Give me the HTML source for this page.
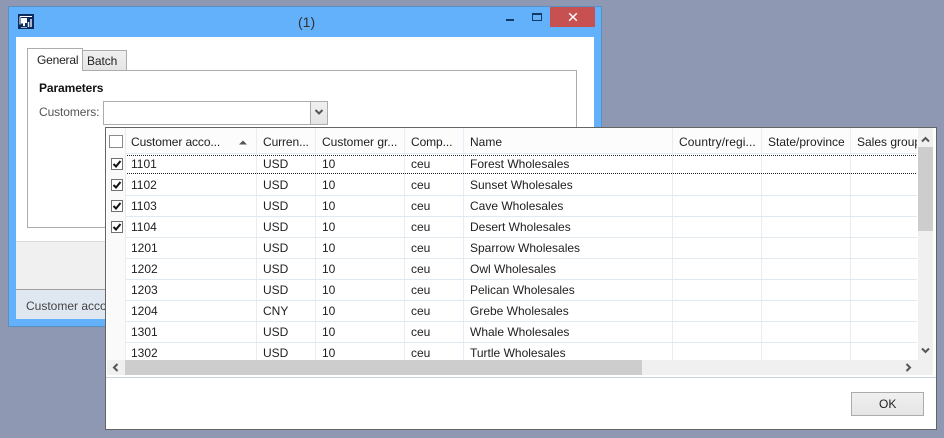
<!DOCTYPE html>
<html><head><meta charset="utf-8">
<style>
html,body{margin:0;padding:0}
body{width:944px;height:438px;position:relative;overflow:hidden;background:#8f98b2;font-family:"Liberation Sans",sans-serif;font-size:12px;color:#1e1e1e}
div{position:absolute;box-sizing:border-box}
.t{white-space:nowrap;line-height:16px;height:16px}
.r{left:126px;width:791px;height:1px;background:#e1e9f1}
.c{top:128px;width:1px;height:232px;background:#e6edf4}
.h{top:134px}
.cb{left:111px;width:12px;height:12px;border:1px solid #707070;background:#fff}
.cb svg{position:absolute;left:0;top:0}
.d{left:127px;width:790px;height:1px;background-image:linear-gradient(90deg,#222 50%,transparent 50%);background-size:2px 1px}
</style></head><body>
<!-- main window -->
<div style="left:8px;top:6px;width:594px;height:321px;background:#63b0fb;border:1px solid #5b8fc0"></div>
<div style="left:16px;top:37px;width:578px;height:282px;background:#fff"></div>
<svg style="position:absolute;left:18px;top:14px" width="16" height="15" viewBox="0 0 16 15"><rect width="16" height="15" fill="#0c2a5c"/><path d="M2 2.500h12M2 2.500v8" stroke="#fff" stroke-width="1"/><path d="M3 4h6v5H7v3H5V9.500H3z" fill="#fff"/><path d="M10.500 13V8M13 13V5" stroke="#dfe8f5" stroke-width="1.500"/><path d="M3 13.500h6" stroke="#9fb4d0" stroke-width="1"/></svg>
<div class="t" style="left:298px;top:14px;font-size:14px;color:#333">(1)</div>
<div style="left:506px;top:19px;width:8px;height:2px;background:#123a66"></div>
<div style="left:532px;top:13px;width:10px;height:8px;border:1px solid #123a66;border-top-width:2px"></div>
<div style="left:550px;top:7px;width:45px;height:20px;background:#c75050"></div>
<svg style="position:absolute;left:568px;top:12px" width="10" height="10" viewBox="0 0 10 10"><path d="M1.200 1.200l7.600 7.600M8.800 1.200L1.200 8.800" stroke="#fff" stroke-width="1.400"/></svg>
<!-- tab pane -->
<div style="left:27px;top:70px;width:550px;height:158px;border:1px solid #acacac;background:#fff"></div>
<div style="left:82px;top:50px;width:45px;height:21px;border:1px solid #acacac;background:linear-gradient(#f0f0f0,#e5e5e5)"></div>
<div style="left:27px;top:48px;width:56px;height:23px;border:1px solid #acacac;border-bottom:0;background:#fff"></div>
<div class="t" style="left:37px;top:52px;color:#222;letter-spacing:-.2px">General</div>
<div class="t" style="left:87px;top:53px;color:#222;letter-spacing:-.1px">Batch</div>
<div class="t" style="left:39px;top:80px;font-weight:bold;color:#111;letter-spacing:-.1px">Parameters</div>
<div class="t" style="left:39px;top:104px;color:#555;letter-spacing:-.1px">Customers:</div>
<div style="left:103px;top:101px;width:225px;height:24px;border:1px solid #acacac;background:#fff"></div>
<div style="left:310px;top:102px;width:17px;height:22px;border-left:1px solid #acacac;background:linear-gradient(#f0f0f0,#e5e5e5)"></div>
<svg style="position:absolute;left:314px;top:108px" width="10" height="9" viewBox="0 0 10 9"><path d="M1.500 2l3.500 3.500L8.500 2" fill="none" stroke="#555" stroke-width="2"/></svg>
<!-- bottom bands -->
<div style="left:16px;top:241px;width:578px;height:48px;background:#f0f0f0;border-top:1px solid #dcdcdc"></div>
<div style="left:16px;top:289px;width:578px;height:30px;background:#dfe8f1;border-top:1px solid #a0a0a0"></div>
<div class="t" style="left:26px;top:298px;color:#444">Customer acco</div>
<!-- dialog -->
<div style="left:105px;top:127px;width:832px;height:303px;background:#fff;border:1px solid #646464"></div>
<div style="left:107px;top:128px;width:19px;height:232px;background:#fafafa"></div>
<div style="left:107px;top:128px;width:810px;height:25px;background:#fcfcfc"></div>
<div style="left:126px;top:153px;width:791px;height:1px;background:#e1e9f1"></div>
<div class="c" style="left:125px"></div><div class="c" style="left:256px"></div><div class="c" style="left:315px"></div><div class="c" style="left:404px"></div><div class="c" style="left:463px"></div><div class="c" style="left:672px"></div><div class="c" style="left:761px"></div><div class="c" style="left:850px"></div>
<div class="r" style="top:195px"></div><div class="r" style="top:216px"></div><div class="r" style="top:237px"></div><div class="r" style="top:258px"></div><div class="r" style="top:279px"></div><div class="r" style="top:300px"></div><div class="r" style="top:321px"></div><div class="r" style="top:342px"></div>
<div class="d" style="top:155px"></div><div class="d" style="top:173px"></div>
<!-- header -->
<div class="t h" style="left:131px;letter-spacing:-.1px">Customer acco...</div>
<svg style="position:absolute;left:239px;top:140px" width="8" height="5" viewBox="0 0 8 5"><path d="M0 4.500L4 .5l4 4z" fill="#555"/></svg>
<div class="t h" style="left:263px;letter-spacing:-.1px">Curren...</div>
<div class="t h" style="left:322px">Customer gr...</div>
<div class="t h" style="left:411px;letter-spacing:-.1px">Comp...</div>
<div class="t h" style="left:470px">Name</div>
<div class="t h" style="left:679px;letter-spacing:.1px">Country/regi...</div>
<div class="t h" style="left:768px">State/province</div>
<div class="t h" style="left:857px;width:60px;overflow:hidden">Sales group</div>
<!-- checkboxes -->
<div class="cb" style="left:109px;top:135px;width:14px;height:13px;border-color:#8a8a8a"></div>
<div class="cb" style="top:158px"><svg width="10" height="10" viewBox="0 0 10 10"><path d="M1.500 5l2.500 2.500L8.500 2" fill="none" stroke="#111" stroke-width="2"/></svg></div>
<div class="cb" style="top:179px"><svg width="10" height="10" viewBox="0 0 10 10"><path d="M1.500 5l2.500 2.500L8.500 2" fill="none" stroke="#111" stroke-width="2"/></svg></div>
<div class="cb" style="top:200px"><svg width="10" height="10" viewBox="0 0 10 10"><path d="M1.500 5l2.500 2.500L8.500 2" fill="none" stroke="#111" stroke-width="2"/></svg></div>
<div class="cb" style="top:221px"><svg width="10" height="10" viewBox="0 0 10 10"><path d="M1.500 5l2.500 2.500L8.500 2" fill="none" stroke="#111" stroke-width="2"/></svg></div>
<!-- rows -->
<div class="t" style="left:131px;top:156px">1101</div><div class="t" style="left:263px;top:156px">USD</div><div class="t" style="left:322px;top:156px">10</div><div class="t" style="left:411px;top:156px">ceu</div><div class="t" style="left:470px;top:156px">Forest Wholesales</div>
<div class="t" style="left:131px;top:177px">1102</div><div class="t" style="left:263px;top:177px">USD</div><div class="t" style="left:322px;top:177px">10</div><div class="t" style="left:411px;top:177px">ceu</div><div class="t" style="left:470px;top:177px">Sunset Wholesales</div>
<div class="t" style="left:131px;top:198px">1103</div><div class="t" style="left:263px;top:198px">USD</div><div class="t" style="left:322px;top:198px">10</div><div class="t" style="left:411px;top:198px">ceu</div><div class="t" style="left:470px;top:198px">Cave Wholesales</div>
<div class="t" style="left:131px;top:219px">1104</div><div class="t" style="left:263px;top:219px">USD</div><div class="t" style="left:322px;top:219px">10</div><div class="t" style="left:411px;top:219px">ceu</div><div class="t" style="left:470px;top:219px">Desert Wholesales</div>
<div class="t" style="left:131px;top:240px">1201</div><div class="t" style="left:263px;top:240px">USD</div><div class="t" style="left:322px;top:240px">10</div><div class="t" style="left:411px;top:240px">ceu</div><div class="t" style="left:470px;top:240px">Sparrow Wholesales</div>
<div class="t" style="left:131px;top:261px">1202</div><div class="t" style="left:263px;top:261px">USD</div><div class="t" style="left:322px;top:261px">10</div><div class="t" style="left:411px;top:261px">ceu</div><div class="t" style="left:470px;top:261px">Owl Wholesales</div>
<div class="t" style="left:131px;top:282px">1203</div><div class="t" style="left:263px;top:282px">USD</div><div class="t" style="left:322px;top:282px">10</div><div class="t" style="left:411px;top:282px">ceu</div><div class="t" style="left:470px;top:282px">Pelican Wholesales</div>
<div class="t" style="left:131px;top:303px">1204</div><div class="t" style="left:263px;top:303px">CNY</div><div class="t" style="left:322px;top:303px">10</div><div class="t" style="left:411px;top:303px">ceu</div><div class="t" style="left:470px;top:303px">Grebe Wholesales</div>
<div class="t" style="left:131px;top:324px">1301</div><div class="t" style="left:263px;top:324px">USD</div><div class="t" style="left:322px;top:324px">10</div><div class="t" style="left:411px;top:324px">ceu</div><div class="t" style="left:470px;top:324px">Whale Wholesales</div>
<div style="left:107px;top:345px;width:810px;height:15px;overflow:hidden">
<div class="t" style="left:24px;top:0">1302</div><div class="t" style="left:156px;top:0">USD</div><div class="t" style="left:215px;top:0">10</div><div class="t" style="left:304px;top:0">ceu</div><div class="t" style="left:363px;top:0">Turtle Wholesales</div>
</div>
<!-- scrollbars -->
<div style="left:918px;top:128px;width:15px;height:232px;background:#f0f0f0"></div>
<div style="left:918px;top:147px;width:15px;height:84px;background:#cdcdcd"></div>
<svg style="position:absolute;left:921px;top:136px" width="9" height="7" viewBox="0 0 9 7"><path d="M1 5.500l3.500-3.500L8 5.500" fill="none" stroke="#555" stroke-width="2"/></svg>
<svg style="position:absolute;left:921px;top:347px" width="9" height="7" viewBox="0 0 9 7"><path d="M1 1.500L4.500 5 8 1.500" fill="none" stroke="#555" stroke-width="2"/></svg>
<div style="left:107px;top:360px;width:826px;height:15px;background:#f0f0f0"></div>
<div style="left:125px;top:360px;width:517px;height:15px;background:#cdcdcd"></div>
<svg style="position:absolute;left:112px;top:363px" width="7" height="9" viewBox="0 0 7 9"><path d="M5.500 1L2 4.500 5.500 8" fill="none" stroke="#555" stroke-width="2"/></svg>
<svg style="position:absolute;left:905px;top:363px" width="7" height="9" viewBox="0 0 7 9"><path d="M1.500 1L5 4.500 1.500 8" fill="none" stroke="#555" stroke-width="2"/></svg>
<div style="left:106px;top:377px;width:830px;height:1px;background:#c8d5e0"></div>
<!-- OK -->
<div style="left:851px;top:392px;width:73px;height:24px;border:1px solid #acacac;background:linear-gradient(#f0f0f0,#e5e5e5)"></div>
<div class="t" style="left:879px;top:396px;color:#222">OK</div>
</body></html>
